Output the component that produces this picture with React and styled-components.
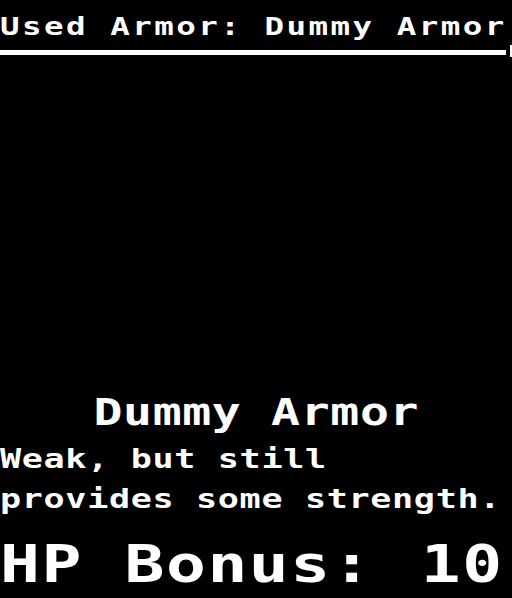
import React from 'react'
import styled, { createGlobalStyle } from 'styled-components'

const GlobalStyle = createGlobalStyle`
    html, body {
        margin: 0;
        padding: 0;
        background: #000;
    }
`;

const Screen = styled.div`
    width: 512px;
    height: 598px;
    background: #000;
    color: #fff;
    font-family: "DejaVu Sans Mono", "Liberation Mono", monospace;
    font-weight: bold;
    display: flex;
    flex-direction: column;
    overflow: hidden;
`;

// the monospace face is narrower than the chunky bitmap glyphs, so widen it
const Wide = styled.span`
    display: inline-block;
    white-space: nowrap;
    transform: scaleX(1.3);
    transform-origin: ${p => p.$origin || 'left'} center;
`;

const Header = styled.div`
    padding-top: 9px;
    font-size: 25px;
    line-height: 36px;
    letter-spacing: 1.9px;
`;

const RuleRow = styled.div`
    display: flex;
    height: 12px;
    gap: 4px;
`;

const Rule = styled.span`
    flex: 1;
    height: 5px;
    margin-top: 5px;
    background: #fff;
`;

const Tick = styled.span`
    width: 2px;
    height: 12px;
    background: #fff;
`;

const Details = styled.div`
    margin-top: auto;
    padding-bottom: 8px;
    display: flex;
    flex-direction: column;
`;

const Title = styled.div`
    font-size: 37px;
    line-height: 40px;
    letter-spacing: 0.5px;
    text-align: center;
`;

const Description = styled.div`
    margin-top: 6px;
    font-size: 27px;
    line-height: 40px;
    letter-spacing: 0.5px;
    display: flex;
    flex-direction: column;
    align-items: flex-start;
`;

const StatRow = styled.div`
    margin-top: 20px;
    display: flex;
    justify-content: space-between;
    font-size: 51px;
    line-height: 51px;
    letter-spacing: 1.2px;
`;

const StatValue = styled(Wide)`
    margin-right: 8px;
`;

export default function App() {
    const armor = {
        name: 'Dummy Armor',
        lines: ['Weak, but still', 'provides some strength.'],
        hpBonus: 10,
    };

    return (
        <>
            <GlobalStyle />
            <Screen>
                <Header>
                    <Wide>Used Armor: {armor.name}</Wide>
                </Header>
                <RuleRow>
                    <Rule />
                    <Tick />
                </RuleRow>
                <Details>
                    <Title>
                        <Wide $origin="center">{armor.name}</Wide>
                    </Title>
                    <Description>
                        {armor.lines.map(line => (
                            <Wide key={line}>{line}</Wide>
                        ))}
                    </Description>
                    <StatRow>
                        <Wide>HP Bonus:</Wide>
                        <StatValue $origin="right">{armor.hpBonus}</StatValue>
                    </StatRow>
                </Details>
            </Screen>
        </>
    )
}
